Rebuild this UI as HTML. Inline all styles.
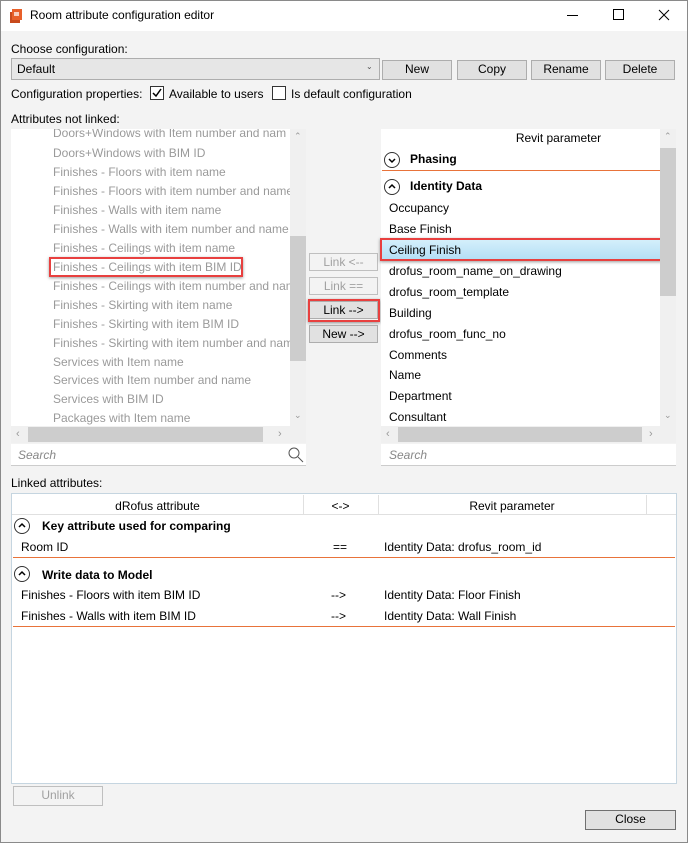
<!DOCTYPE html>
<html><head><meta charset="utf-8"><style>
*{box-sizing:border-box;margin:0;padding:0}
body{width:688px;height:843px;position:relative;background:#f3f3f3;font-family:"Liberation Sans",sans-serif;font-size:12px;color:#000;overflow:hidden}
.a{position:absolute;white-space:nowrap}
.win{position:absolute;left:0;top:0;width:688px;height:843px;border:1px solid #8a8a8a}
.btn{position:absolute;background:#e1e1e1;border:1px solid #adadad;text-align:center;line-height:17px;font-size:12px}
.dis{background:#f3f3f3;border-color:#bfbfbf;color:#a0a0a0}
.li{position:absolute;left:53px;color:#9a9a9a;font-size:12px}
.ri{position:absolute;left:389px;font-size:12px}
.circ{position:absolute;width:16px;height:16px;border:1.5px solid #333;border-radius:50%}
.orange{position:absolute;height:1px;background:#e8733a}
.sb{position:absolute;background:#f0f0f0}
.arrow{position:absolute;color:#999;font-size:9px}
</style></head><body>
<div class="win"></div>
<div class="a" style="left:1px;top:1px;width:686px;height:30px;background:#fff"></div>
<svg class="a" style="left:9px;top:8px" width="14" height="16"><rect x="1" y="4" width="10" height="11" fill="#c84a1c"/><rect x="3" y="1" width="10" height="11" fill="#e8602a"/><rect x="5" y="4" width="5" height="4" fill="#fff" opacity=".7"/></svg>
<div class="a" style="left:30px;top:8px;font-size:12px">Room attribute configuration editor</div>
<div class="a" style="left:567px;top:15px;width:11px;height:1px;background:#000"></div>
<div class="a" style="left:613px;top:9px;width:11px;height:11px;border:1px solid #000"></div>
<svg class="a" style="left:658px;top:9px" width="12" height="12"><path d="M1 1L11 11M11 1L1 11" stroke="#000" stroke-width="1"/></svg>

<div class="a" style="left:11px;top:42px">Choose configuration:</div>
<div class="a" style="left:11px;top:58px;width:369px;height:22px;background:#e6e6e6;border:1px solid #adadad;padding:3px 5px">Default</div>
<div class="a" style="left:366px;top:62px;font-size:8px;color:#555">⌄</div>
<div class="btn" style="left:382px;top:60px;width:70px;height:20px">New</div>
<div class="btn" style="left:457px;top:60px;width:70px;height:20px">Copy</div>
<div class="btn" style="left:531px;top:60px;width:70px;height:20px">Rename</div>
<div class="btn" style="left:605px;top:60px;width:70px;height:20px">Delete</div>
<div class="a" style="left:11px;top:87px">Configuration properties:</div>
<div class="a" style="left:150px;top:86px;width:14px;height:14px;border:1px solid #333;background:#fff"></div>
<svg class="a" style="left:151px;top:87px" width="12" height="12"><path d="M2 6L5 9L10 2" stroke="#000" stroke-width="1.5" fill="none"/></svg>
<div class="a" style="left:169px;top:87px">Available to users</div>
<div class="a" style="left:272px;top:86px;width:14px;height:14px;border:1px solid #333;background:#fff"></div>
<div class="a" style="left:291px;top:87px">Is default configuration</div>
<div class="a" style="left:11px;top:112px">Attributes not linked:</div>

<!-- left list -->
<div class="a" style="left:11px;top:129px;width:279px;height:297px;background:#fff;overflow:hidden">
<div class="li" style="left:42px;top:-3px">Doors+Windows with Item number and nam</div>
<div class="li" style="left:42px;top:17px">Doors+Windows with BIM ID</div>
<div class="li" style="left:42px;top:36px">Finishes - Floors with item name</div>
<div class="li" style="left:42px;top:55px">Finishes - Floors with item number and name</div>
<div class="li" style="left:42px;top:74px">Finishes - Walls with item name</div>
<div class="li" style="left:42px;top:93px">Finishes - Walls with item number and name</div>
<div class="li" style="left:42px;top:112px">Finishes - Ceilings with item name</div>
<div class="li" style="left:42px;top:131px">Finishes - Ceilings with item BIM ID</div>
<div class="li" style="left:42px;top:150px">Finishes - Ceilings with item number and name</div>
<div class="li" style="left:42px;top:169px">Finishes - Skirting with item name</div>
<div class="li" style="left:42px;top:188px">Finishes - Skirting with item BIM ID</div>
<div class="li" style="left:42px;top:207px">Finishes - Skirting with item number and name</div>
<div class="li" style="left:42px;top:226px">Services with Item name</div>
<div class="li" style="left:42px;top:244px">Services with Item number and name</div>
<div class="li" style="left:42px;top:263px">Services with BIM ID</div>
<div class="li" style="left:42px;top:282px">Packages with Item name</div>
</div>
<div class="a" style="left:49px;top:257px;width:194px;height:20px;border:2px solid #e8403f;box-shadow:0 1px 3px rgba(0,0,0,.4)"></div>
<div class="sb" style="left:290px;top:129px;width:16px;height:297px"></div>
<div class="a" style="left:290px;top:236px;width:16px;height:125px;background:#cdcdcd"></div>
<div class="arrow" style="left:294px;top:131px">⌃</div>
<div class="arrow" style="left:294px;top:410px">⌄</div>
<div class="sb" style="left:11px;top:426px;width:295px;height:17px"></div>
<div class="a" style="left:28px;top:427px;width:235px;height:15px;background:#cdcdcd"></div>
<div class="arrow" style="left:16px;top:428px;font-size:11px">‹</div>
<div class="arrow" style="left:278px;top:428px;font-size:11px">›</div>
<div class="a" style="left:11px;top:444px;width:295px;height:22px;background:#fff;border-bottom:1px solid #ccc"></div>
<div class="a" style="left:18px;top:448px;color:#888;font-style:italic">Search</div>
<svg class="a" style="left:287px;top:446px" width="18" height="18"><circle cx="7" cy="7" r="5" stroke="#555" fill="none"/><path d="M11 11L16 16" stroke="#555"/></svg>

<!-- middle buttons -->
<div class="btn dis" style="left:309px;top:253px;width:69px;height:18px">Link &lt;--</div>
<div class="btn dis" style="left:309px;top:277px;width:69px;height:18px">Link ==</div>
<div class="btn" style="left:309px;top:301px;width:69px;height:18px">Link --&gt;</div>
<div class="a" style="left:308px;top:299px;width:72px;height:23px;border:2px solid #e8403f;box-shadow:0 1px 3px rgba(0,0,0,.4)"></div>
<div class="btn" style="left:309px;top:325px;width:69px;height:18px">New --&gt;</div>

<!-- right list -->
<div class="a" style="left:381px;top:129px;width:279px;height:297px;background:#fff"></div>
<div class="a" style="left:381px;top:131px;width:279px;text-align:center;padding-left:76px">Revit parameter</div>
<div class="circ" style="left:384px;top:152px"></div>
<svg class="a" style="left:384px;top:152px" width="16" height="16"><path d="M5 7L8 10L11 7" stroke="#000" stroke-width="1.5" fill="none"/></svg>
<div class="a" style="left:410px;top:152px;font-weight:bold">Phasing</div>
<div class="orange" style="left:382px;top:170px;width:278px"></div>
<div class="circ" style="left:384px;top:179px"></div>
<svg class="a" style="left:384px;top:179px" width="16" height="16"><path d="M5 9L8 6L11 9" stroke="#000" stroke-width="1.5" fill="none"/></svg>
<div class="a" style="left:410px;top:179px;font-weight:bold">Identity Data</div>
<div class="ri" style="top:201px">Occupancy</div>
<div class="ri" style="top:222px">Base Finish</div>
<div class="a" style="left:382px;top:240px;width:278px;height:20px;background:linear-gradient(#d4effb,#b3def5)"></div>
<div class="ri" style="top:243px">Ceiling Finish</div>
<div class="a" style="left:380px;top:238px;width:282px;height:23px;border:2px solid #e8403f;box-shadow:0 1px 3px rgba(0,0,0,.4)"></div>
<div class="ri" style="top:264px">drofus_room_name_on_drawing</div>
<div class="ri" style="top:285px">drofus_room_template</div>
<div class="ri" style="top:306px">Building</div>
<div class="ri" style="top:327px">drofus_room_func_no</div>
<div class="ri" style="top:348px">Comments</div>
<div class="ri" style="top:368px">Name</div>
<div class="ri" style="top:389px">Department</div>
<div class="ri" style="top:410px">Consultant</div>
<div class="sb" style="left:660px;top:129px;width:16px;height:297px"></div>
<div class="a" style="left:660px;top:148px;width:16px;height:148px;background:#cdcdcd"></div>
<div class="arrow" style="left:664px;top:131px">⌃</div>
<div class="arrow" style="left:664px;top:410px">⌄</div>
<div class="sb" style="left:381px;top:426px;width:295px;height:17px"></div>
<div class="a" style="left:398px;top:427px;width:244px;height:15px;background:#cdcdcd"></div>
<div class="arrow" style="left:386px;top:428px;font-size:11px">‹</div>
<div class="arrow" style="left:649px;top:428px;font-size:11px">›</div>
<div class="a" style="left:381px;top:444px;width:295px;height:22px;background:#fff;border-bottom:1px solid #ccc"></div>
<div class="a" style="left:389px;top:448px;color:#888;font-style:italic">Search</div>

<!-- linked -->
<div class="a" style="left:11px;top:476px">Linked attributes:</div>
<div class="a" style="left:11px;top:493px;width:666px;height:291px;background:#fff;border:1px solid #c5d5e0"></div>
<div class="a" style="left:12px;top:494px;width:664px;height:21px;border-bottom:1px solid #e0e0e0"></div>
<div class="a" style="left:303px;top:495px;width:1px;height:20px;background:#e0e0e0"></div>
<div class="a" style="left:378px;top:495px;width:1px;height:20px;background:#e0e0e0"></div>
<div class="a" style="left:646px;top:495px;width:1px;height:20px;background:#e0e0e0"></div>
<div class="a" style="left:12px;top:499px;width:291px;text-align:center">dRofus attribute</div>
<div class="a" style="left:303px;top:499px;width:75px;text-align:center">&lt;-&gt;</div>
<div class="a" style="left:378px;top:499px;width:268px;text-align:center">Revit parameter</div>
<div class="circ" style="left:14px;top:518px"></div>
<svg class="a" style="left:14px;top:518px" width="16" height="16"><path d="M5 9L8 6L11 9" stroke="#000" stroke-width="1.5" fill="none"/></svg>
<div class="a" style="left:42px;top:519px;font-weight:bold">Key attribute used for comparing</div>
<div class="a" style="left:21px;top:540px">Room ID</div>
<div class="a" style="left:333px;top:540px">==</div>
<div class="a" style="left:384px;top:540px">Identity Data: drofus_room_id</div>
<div class="orange" style="left:13px;top:557px;width:662px"></div>
<div class="circ" style="left:14px;top:566px"></div>
<svg class="a" style="left:14px;top:566px" width="16" height="16"><path d="M5 9L8 6L11 9" stroke="#000" stroke-width="1.5" fill="none"/></svg>
<div class="a" style="left:42px;top:568px;font-weight:bold">Write data to Model</div>
<div class="a" style="left:21px;top:588px">Finishes - Floors with item BIM ID</div>
<div class="a" style="left:331px;top:588px">--&gt;</div>
<div class="a" style="left:384px;top:588px">Identity Data: Floor Finish</div>
<div class="a" style="left:21px;top:609px">Finishes - Walls with item BIM ID</div>
<div class="a" style="left:331px;top:609px">--&gt;</div>
<div class="a" style="left:384px;top:609px">Identity Data: Wall Finish</div>
<div class="orange" style="left:13px;top:626px;width:662px"></div>

<div class="btn dis" style="left:13px;top:786px;width:90px;height:20px">Unlink</div>
<div class="btn" style="left:585px;top:810px;width:91px;height:20px;border-color:#707070">Close</div>
</body></html>
